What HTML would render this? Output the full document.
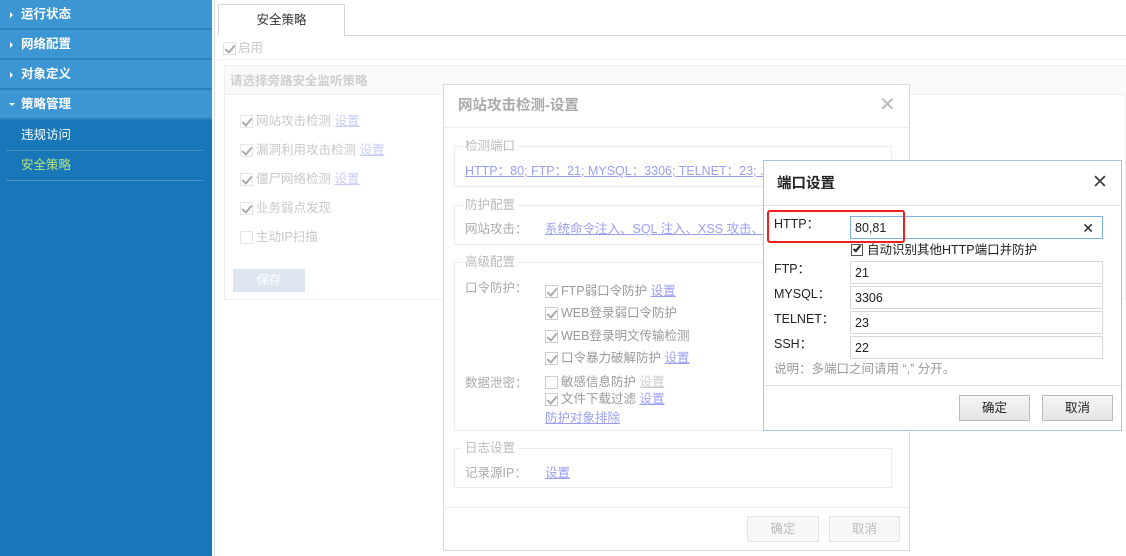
<!DOCTYPE html>
<html><head><meta charset="utf-8"><style>
*{margin:0;padding:0;box-sizing:border-box}
body{width:1126px;height:556px;overflow:hidden;background:#fff;font-family:"Liberation Sans","Noto Sans CJK SC",sans-serif;font-size:12px;position:relative;line-height:14px}
.a{position:absolute;white-space:nowrap}
#side{left:0;top:0;width:212px;height:556px;background:#1877b9}
.mh{position:absolute;left:0;width:212px;height:30px;background:#3d96d4;border-bottom:2px solid #2a7fbf;color:#fff;font-weight:bold;font-size:12.5px;line-height:28px;padding-left:21px}
.mh i{position:absolute;left:10px;top:12px;width:0;height:0;border-top:3px solid transparent;border-bottom:3px solid transparent;border-left:3px solid #fff}
.mh i.d{left:9px;top:13px;border-left:3px solid transparent;border-right:3px solid transparent;border-top:3px solid #fff;border-bottom:0}
.si{position:absolute;left:6px;width:197px;height:30px;border-bottom:1px solid #4b8fc4;color:#fff;font-size:12.5px;line-height:28px;padding-left:15px}
.cb{position:absolute;width:13px;height:13px;border:1px solid #ccc;background:#fff}
.cb.k::after{content:"";position:absolute;left:3px;top:0px;width:4px;height:8px;border-right:2px solid #aaa;border-bottom:2px solid #aaa;transform:rotate(40deg)}
.g{color:#c8c8c8;font-size:12.5px}
.lk{color:#9a9ff5;text-decoration:underline}
.fs{position:absolute;border:1px solid #ececf0}
.lg{position:absolute;background:#fff;color:#bbb;font-size:12.5px;padding:0 3px;line-height:16px}
.t{color:#aaa;font-size:12.5px}
.btn{position:absolute;border:1px solid #e4e4e4;background:#f7f7f7;color:#bbb;text-align:center;font-size:12.5px}
.inp{position:absolute;left:850px;width:253px;height:23px;border:1px solid #d8d8d8;background:#fff;font-size:12.5px;line-height:22px;padding-left:4px;color:#222}
.lb{position:absolute;left:774px;font-size:12.5px;color:#222}
</style></head><body>
<div id="side" class="a">
<div class="mh" style="top:0"><i></i>运行状态</div>
<div class="mh" style="top:30px"><i></i>网络配置</div>
<div class="mh" style="top:60px"><i></i>对象定义</div>
<div class="mh" style="top:90px"><i class="d"></i>策略管理</div>
<div class="si" style="top:121px">违规访问</div>
<div class="si" style="top:151px;color:#b7e27a">安全策略</div>
</div>
<div class="a" style="left:214px;top:0;width:1px;height:556px;background:#cfdbe8"></div>
<div class="a" style="left:218px;top:35px;width:908px;height:1px;background:#d6d6d6"></div>
<div class="a" style="left:218px;top:4px;width:127px;height:32px;border:1px solid #d6d6d6;border-bottom:none;background:#fff;text-align:center;line-height:30px;font-size:12.5px;color:#333">安全策略</div>
<div class="cb k" style="left:223px;top:42px;border-color:#e2e2e2"></div>
<div class="a g" style="left:238px;top:41px">启用</div>
<div class="a" style="left:218px;top:59px;width:908px;height:1px;background:#f0f0f0"></div>
<div class="a" style="left:224px;top:65px;width:902px;height:235px;border:1px solid #f0f0f0"></div>
<div class="a" style="left:225px;top:66px;width:901px;height:29px;background:#fafafa;border-bottom:1px solid #f0f0f0"></div>
<div class="a g" style="left:230px;top:74px;font-weight:bold;color:#cfcfcf">请选择旁路安全监听策略</div>
<div class="cb k" style="left:240px;top:115px;border-color:#e6e6e6"></div><div class="a g" style="left:256px;top:114px">网站攻击检测 <span class="lk" style="color:#c9ccf7">设置</span></div>
<div class="cb k" style="left:240px;top:144px;border-color:#e6e6e6"></div><div class="a g" style="left:256px;top:143px">漏洞利用攻击检测 <span class="lk" style="color:#c9ccf7">设置</span></div>
<div class="cb k" style="left:240px;top:173px;border-color:#e6e6e6"></div><div class="a g" style="left:256px;top:172px">僵尸网络检测 <span class="lk" style="color:#c9ccf7">设置</span></div>
<div class="cb k" style="left:240px;top:202px;border-color:#e6e6e6"></div><div class="a g" style="left:256px;top:201px">业务弱点发现</div>
<div class="cb" style="left:240px;top:231px;border-color:#e6e6e6"></div><div class="a g" style="left:256px;top:230px">主动IP扫描</div>
<div class="a" style="left:233px;top:269px;width:72px;height:23px;background:#dde6f0;color:#fff;text-align:center;line-height:23px;font-size:12.5px">保存</div>

<!-- dialog 1 -->
<div class="a" style="left:443px;top:84px;width:467px;height:467px;border:1px solid #cfdcec;background:#fff"></div>
<div class="a" style="left:458px;top:98px;font-size:14.5px;font-weight:bold;color:#aaa;line-height:16px">网站攻击检测-设置</div>
<div class="a" style="left:879px;top:95px;font-size:20px;color:#bbb;line-height:20px">✕</div>
<div class="a" style="left:444px;top:127px;width:465px;height:1px;background:#eee"></div>
<div class="fs" style="left:454px;top:146px;width:438px;height:41px"></div><div class="lg" style="left:462px;top:138px">检测端口</div>
<div class="a lk" style="left:465px;top:164px;font-size:12.5px">HTTP：80; FTP：21; MYSQL：3306; TELNET：23; ...</div>
<div class="fs" style="left:454px;top:205px;width:438px;height:40px"></div><div class="lg" style="left:462px;top:197px">防护配置</div>
<div class="a t" style="left:465px;top:222px">网站攻击：</div><div class="a lk" style="left:545px;top:222px;font-size:12.5px">系统命令注入、SQL 注入、XSS 攻击、跨站</div>
<div class="fs" style="left:454px;top:262px;width:438px;height:169px"></div><div class="lg" style="left:462px;top:254px">高级配置</div>
<div class="a t" style="left:465px;top:281px">口令防护：</div>
<div class="cb k" style="left:545px;top:285px"></div><div class="a t" style="left:561px;top:284px;color:#999">FTP弱口令防护 <span class="lk">设置</span></div>
<div class="cb k" style="left:545px;top:307px"></div><div class="a t" style="left:561px;top:306px;color:#999">WEB登录弱口令防护</div>
<div class="cb k" style="left:545px;top:330px"></div><div class="a t" style="left:561px;top:329px;color:#999">WEB登录明文传输检测</div>
<div class="cb k" style="left:545px;top:352px"></div><div class="a t" style="left:561px;top:351px;color:#999">口令暴力破解防护 <span class="lk">设置</span></div>
<div class="a t" style="left:465px;top:376px">数据泄密：</div>
<div class="cb" style="left:545px;top:376px"></div><div class="a t" style="left:561px;top:375px;color:#999">敏感信息防护 <span class="lk" style="color:#ccc">设置</span></div>
<div class="cb k" style="left:545px;top:393px"></div><div class="a t" style="left:561px;top:392px;color:#999">文件下载过滤 <span class="lk">设置</span></div>
<div class="a lk" style="left:545px;top:411px;font-size:12.5px">防护对象排除</div>
<div class="fs" style="left:454px;top:448px;width:438px;height:40px"></div><div class="lg" style="left:462px;top:440px">日志设置</div>
<div class="a t" style="left:465px;top:466px">记录源IP：</div><div class="a lk" style="left:545px;top:466px;font-size:12.5px">设置</div>
<div class="a" style="left:444px;top:507px;width:465px;height:1px;background:#eee"></div>
<div class="btn" style="left:747px;top:516px;width:72px;height:26px;line-height:24px">确定</div>
<div class="btn" style="left:829px;top:516px;width:71px;height:26px;line-height:24px">取消</div>

<!-- dialog 2 -->
<div class="a" style="left:763px;top:160px;width:359px;height:271px;border:1px solid #a9c4e0;background:#fff"></div>
<div class="a" style="left:777px;top:176px;font-size:14.5px;font-weight:bold;color:#222;line-height:16px">端口设置</div>
<div class="a" style="left:1092px;top:173px;font-size:19px;color:#444;line-height:19px">✕</div>
<div class="a" style="left:764px;top:205px;width:357px;height:1px;background:#e0e0e0"></div>
<div class="lb" style="top:217px">HTTP：</div>
<div class="inp" style="top:216px;border-color:#7fb0e0;height:23px">80,81<span style="position:absolute;right:8px;top:0;font-size:14px">✕</span></div>
<div class="a" style="left:767px;top:210px;width:138px;height:33px;border:2px solid #f0201c;border-radius:3px"></div>
<div class="a" style="left:851px;top:244px;width:12px;height:12px;border:1px solid #555;background:#fff"></div>
<div class="a" style="left:855px;top:244px;width:4px;height:8px;border-right:2px solid #222;border-bottom:2px solid #222;transform:rotate(40deg)"></div>
<div class="a" style="left:867px;top:243px;font-size:12.5px;color:#222">自动识别其他HTTP端口并防护</div>
<div class="lb" style="top:262px">FTP：</div><div class="inp" style="top:261px">21</div>
<div class="lb" style="top:287px">MYSQL：</div><div class="inp" style="top:286px">3306</div>
<div class="lb" style="top:312px">TELNET：</div><div class="inp" style="top:311px">23</div>
<div class="lb" style="top:337px">SSH：</div><div class="inp" style="top:336px">22</div>
<div class="a" style="left:774px;top:362px;font-size:12.5px;color:#999">说明：多端口之间请用 “,” 分开。</div>
<div class="a" style="left:764px;top:385px;width:357px;height:1px;background:#e0e0e0"></div>
<div class="a" style="left:959px;top:395px;width:71px;height:26px;border:1px solid #bbb;background:linear-gradient(#f6f6f6,#e4e4e4);text-align:center;line-height:24px;font-size:12.5px;color:#222">确定</div>
<div class="a" style="left:1042px;top:395px;width:71px;height:26px;border:1px solid #bbb;background:linear-gradient(#f6f6f6,#e4e4e4);text-align:center;line-height:24px;font-size:12.5px;color:#222">取消</div>
</body></html>
